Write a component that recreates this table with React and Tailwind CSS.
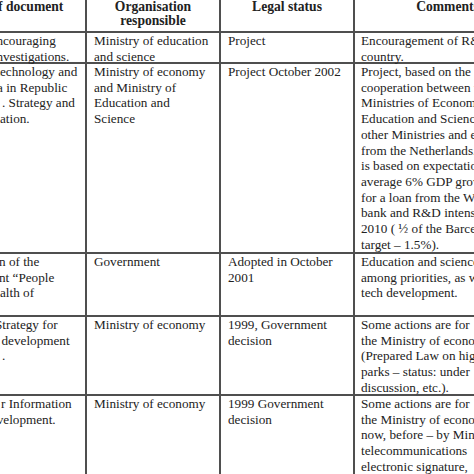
import React from "react";

// Partial view of a policy documents table (left and right edges cropped)
const rows = [
  {
    h: "h-[31px]",
    doc: [
      { t: "ncouraging", c: "ml-[-3.6px]" },
      { t: "nvestigations.", c: "ml-[-3.6px]" },
    ],
    org: ["Ministry of education", "and science"],
    status: ["Project"],
    comment: ["Encouragement of R&D in the", "country."],
  },
  {
    h: "h-[190px]",
    doc: [
      { t: "technology and", c: "ml-[-3.7px]" },
      { t: "a in Republic", c: "ml-[-3px]" },
      { t: ". Strategy and", c: "ml-[2px]" },
      { t: "ation.", c: "ml-0" },
    ],
    org: ["Ministry of economy", "and Ministry of", "Education and", "Science"],
    status: ["Project October 2002"],
    comment: [
      "Project, based on the",
      "cooperation between the",
      "Ministries of Economy,",
      "Education and Science,",
      "other Ministries and experts",
      "from the Netherlands. It",
      "is based on expectations of",
      "average 6% GDP growth and",
      "for a loan from the World",
      "bank and R&D intensity by",
      "2010 ( \u00bd of the Barcelona",
      "target \u2013 1.5%).",
    ],
  },
  {
    h: "h-[63px]",
    doc: [
      { t: "n of the", c: "ml-[-1px]" },
      { t: "nt \u201cPeople", c: "ml-[-1px]" },
      { t: "alth of", c: "ml-0" },
    ],
    org: ["Government"],
    status: ["Adopted in October", "2001"],
    comment: ["Education and science are", "among priorities, as well as high", "tech development."],
  },
  {
    h: "h-[79px]",
    doc: [
      { t: "Strategy for", c: "ml-[-5px]" },
      { t: "development", c: "ml-[1.5px]" },
      { t: ".", c: "ml-[2px]" },
    ],
    org: ["Ministry of economy"],
    status: ["1999, Government", "decision"],
    comment: [
      "Some actions are for",
      "the Ministry of economy",
      "(Prepared Law on high-tech",
      "parks \u2013 status: under",
      "discussion, etc.).",
    ],
  },
  {
    h: "h-[100px]",
    doc: [
      { t: "r Information", c: "ml-[1px]" },
      { t: "velopment.", c: "ml-[-3.3px]" },
    ],
    org: ["Ministry of economy"],
    status: ["1999 Government", "decision"],
    comment: [
      "Some actions are for",
      "the Ministry of economy",
      "now, before \u2013 by Ministry of",
      "telecommunications",
      "electronic signature,",
      "etc.).",
    ],
  },
];

const Lines = ({ items }) => (
  <>
    {items.map((l, i) => (
      <div key={i} className="whitespace-nowrap">
        {l}
      </div>
    ))}
  </>
);

const cell = "border-[#4f4f4f] px-[7px]";

export default function App() {
  return (
    <div
      className="w-[474px] h-[474px] overflow-hidden bg-white text-[#222]"
      style={{ fontFamily: '"Liberation Serif", "Times New Roman", serif' }}
    >
      <div className="grid grid-cols-[87px_134px_134px_185px] w-[540px]">
        {/* header */}
        <div className="h-[33px] border-r-2 border-b-2 border-[#4f4f4f] text-[13.6px] leading-[14px] font-bold">
          <div className="whitespace-nowrap ml-[-2px]">f document</div>
        </div>
        <div className={`h-[33px] border-r-2 border-b-2 ${cell} text-[13.6px] leading-[14px] font-bold text-center`}>
          Organisation
          <br />
          responsible
        </div>
        <div className={`h-[33px] border-r-2 border-b-2 ${cell} text-[13.6px] leading-[14px] font-bold text-center`}>
          Legal status
        </div>
        <div className={`h-[33px] border-b-2 ${cell} text-[13.6px] leading-[14px] font-bold text-center`}>
          Comments
        </div>

        {rows.map((r, i) => (
          <React.Fragment key={i}>
            <div className={`${r.h} border-r-2 border-b-2 border-[#4f4f4f] text-[13.2px] leading-[15.7px]`}>
              {r.doc.map((d, j) => (
                <div key={j} className={`whitespace-nowrap ${d.c}`}>
                  {d.t}
                </div>
              ))}
            </div>
            <div className={`${r.h} border-r-2 border-b-2 ${cell} text-[13.2px] leading-[15.7px]`}>
              <Lines items={r.org} />
            </div>
            <div className={`${r.h} border-r-2 border-b-2 ${cell} text-[13.2px] leading-[15.7px]`}>
              <Lines items={r.status} />
            </div>
            <div className={`${r.h} border-b-2 ${cell} pl-[6px] text-[13.2px] leading-[15.7px]`}>
              <Lines items={r.comment} />
            </div>
          </React.Fragment>
        ))}
      </div>
    </div>
  );
}
